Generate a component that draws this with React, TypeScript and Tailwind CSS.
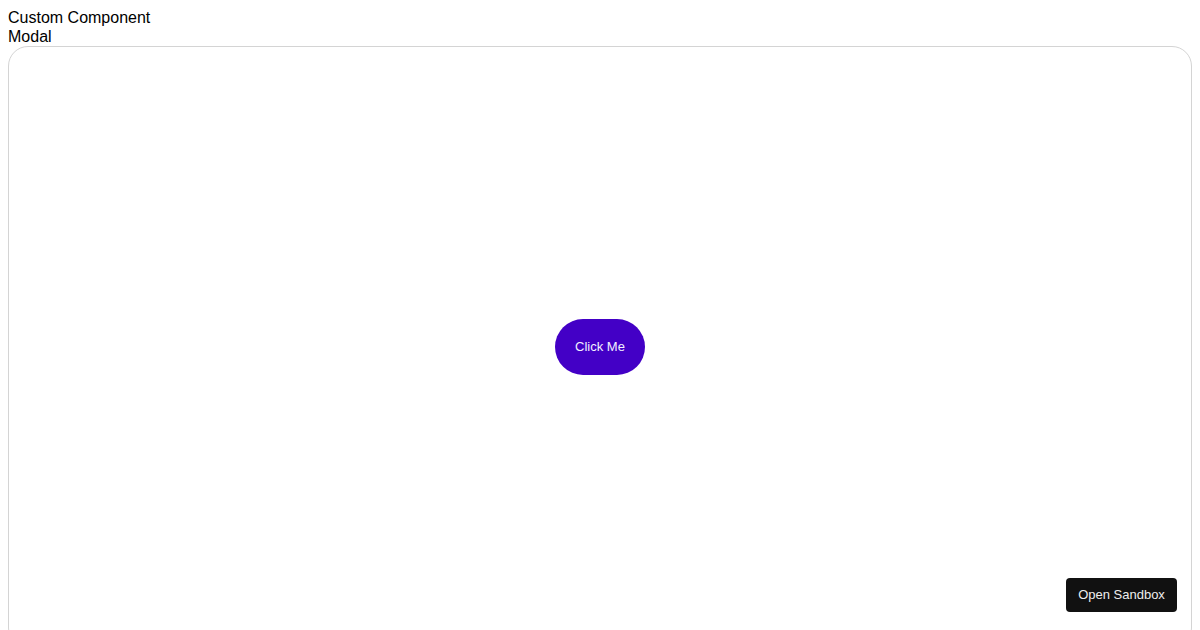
export default function App() {
  return (
    <div className="relative h-[630px] overflow-hidden bg-white px-2 pt-2 font-['Liberation_Sans',Arial,sans-serif] text-black">
      <h1 className="w-[160px] text-base leading-[19px] font-normal">Custom Component Modal</h1>

      {/* Preview frame */}
      <div className="relative flex h-[602px] w-full items-center justify-center rounded-[20px] border border-[#d4d4d4]">
        <button className="h-14 w-[90px] rounded-full bg-[#4300c6] pb-px text-[13px] text-[#f2f0ff]">
          Click Me
        </button>
      </div>

      <button className="absolute right-[23px] bottom-[18px] h-[34px] w-[111px] rounded bg-[#111111] text-[13px] text-[#eeeeee]">
        Open Sandbox
      </button>
    </div>
  );
}
